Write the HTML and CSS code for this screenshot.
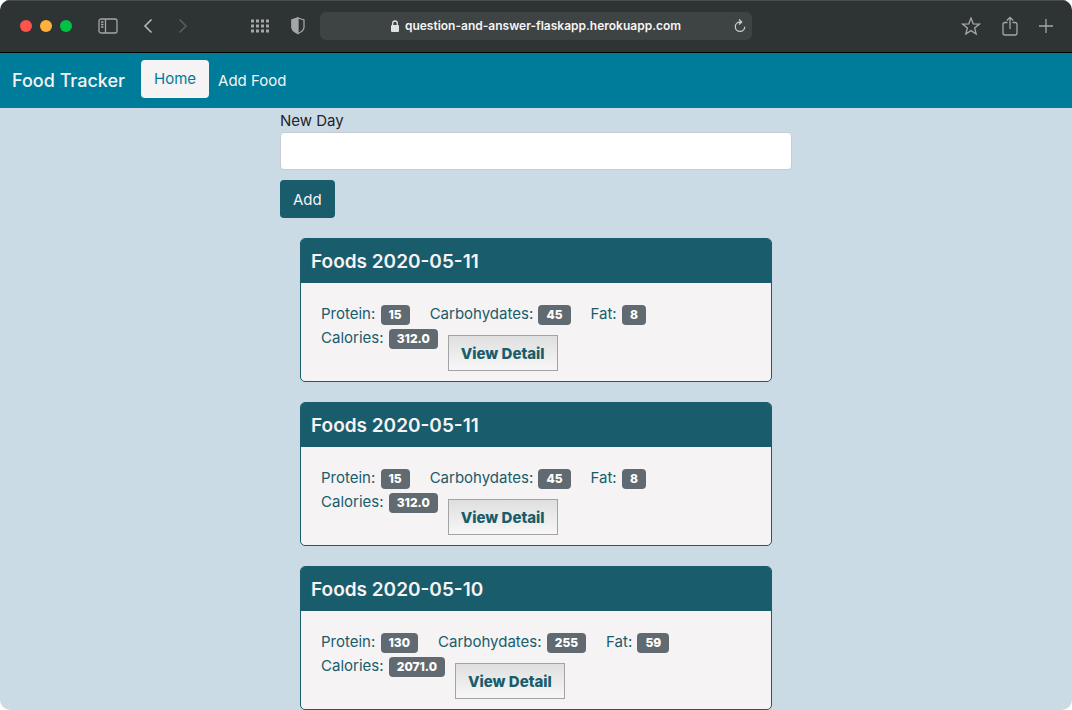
FILE: index.html
```html
<!DOCTYPE html>
<html lang="en">
<head>
<meta charset="utf-8">
<meta name="viewport" content="width=device-width, initial-scale=1">
<title>Food Tracker</title>
<link rel="stylesheet" href="styles.css">
</head>
<body>
<div class="window">
  <header class="toolbar">
    <div class="side side-left">
      <div class="lights"><span class="light red"></span><span class="light yellow"></span><span class="light green"></span></div>
      <button class="tool sidebar-tool" aria-label="Sidebar"><svg width="20" height="16" viewBox="0 0 20 16"><rect x="1" y="1" width="18" height="14" rx="2"/><path d="M7.500 1v14M3 4h2.500M3 6.500h2.500M3 9h2.500"/></svg></button>
      <button class="tool back-tool" aria-label="Back"><svg width="10" height="16" viewBox="0 0 10 16"><path class="bold" d="M8.500 1.500L2 8l6.500 6.500"/></svg></button>
      <button class="tool dim" aria-label="Forward" disabled><svg width="10" height="16" viewBox="0 0 10 16"><path class="bold" d="M1.500 1.500L8 8l-6.500 6.500"/></svg></button>
      <span class="spacer"></span>
      <button class="tool" aria-label="Start page"><svg class="dots" width="18" height="14" viewBox="0 0 18 14"><path d="M0 .5h3v3H0zM5 .5h3v3H5zM10 .5h3v3h-3zM15 .5h3v3h-3zM0 5.500h3v3H0zM5 5.500h3v3H5zM10 5.500h3v3h-3zM15 5.500h3v3h-3zM0 10.500h3v3H0zM5 10.500h3v3H5zM10 10.500h3v3h-3zM15 10.500h3v3h-3z"/></svg></button>
      <button class="tool shield-tool" aria-label="Privacy report"><svg width="14" height="18" viewBox="0 0 14 18"><path d="M7 1l6 2v7c0 3-2.500 5-6 6.500C3.500 15 1 13 1 10V3z"/><path class="solid" d="M7 1v15.500C3.500 15 1 13 1 10V3z"/></svg></button>
    </div>
    <div class="address">
      <svg class="lock" width="8" height="12" viewBox="0 0 8 12"><rect class="fill" x="0" y="5" width="8" height="7" rx="1"/><path d="M1.700 5.500V3.500a2.300 2.500 0 0 1 4.600 0v2"/></svg>
      <span class="host">question-and-answer-flaskapp.herokuapp.com</span>
      <button class="reload" aria-label="Reload"><svg width="12" height="14" viewBox="0 0 12 14"><path d="M7.500 3H6a4.700 4.700 0 1 0 4.700 4.700M5 .6L7.700 3 5 5.500"/></svg></button>
    </div>
    <div class="side side-right">
      <button class="tool" aria-label="Bookmark"><svg width="20" height="18" viewBox="0 0 20 18"><path d="M10 1l2.200 5.800 6.200.3-4.800 3.900 1.600 6L10 13.600 4.800 17l1.600-6-4.800-3.900 6.200-.3z"/></svg></button>
      <button class="tool" aria-label="Share"><svg width="16" height="20" viewBox="0 0 16 20"><path d="M5.500 6.500H3a2 2 0 0 0-2 2V17a2 2 0 0 0 2 2h10a2 2 0 0 0 2-2V8.500a2 2 0 0 0-2-2h-2.500M8 13V1.500M4.800 4.500L8 1.300l3.200 3.200"/></svg></button>
      <button class="tool" aria-label="New tab"><svg width="14" height="14" viewBox="0 0 14 14"><path d="M7 0v14M0 7h14"/></svg></button>
    </div>
  </header>

  <nav class="navbar">
    <a class="brand" href="#">Food Tracker</a>
    <a class="nav-link active" href="#">Home</a>
    <a class="nav-link" href="#">Add Food</a>
  </nav>

  <main class="content">
    <form class="day-form">
      <label for="day">New Day</label>
      <input id="day" type="text">
      <button class="add" type="button">Add</button>
    </form>

    <section class="cards">
      <article class="card">
        <h2>Foods 2020-05-11</h2>
        <div class="card-body">
          <div class="row"><span class="stat">Protein: <b>15</b></span><span class="stat">Carbohydates: <b>45</b></span><span class="stat">Fat: <b>8</b></span></div>
          <div class="row last"><span class="stat">Calories: <b>312.0</b></span><button class="detail" type="button">View Detail</button></div>
        </div>
      </article>
      <article class="card">
        <h2>Foods 2020-05-11</h2>
        <div class="card-body">
          <div class="row"><span class="stat">Protein: <b>15</b></span><span class="stat">Carbohydates: <b>45</b></span><span class="stat">Fat: <b>8</b></span></div>
          <div class="row last"><span class="stat">Calories: <b>312.0</b></span><button class="detail" type="button">View Detail</button></div>
        </div>
      </article>
      <article class="card">
        <h2>Foods 2020-05-10</h2>
        <div class="card-body">
          <div class="row"><span class="stat">Protein: <b>130</b></span><span class="stat">Carbohydates: <b>255</b></span><span class="stat">Fat: <b>59</b></span></div>
          <div class="row last"><span class="stat">Calories: <b>2071.0</b></span><button class="detail" type="button">View Detail</button></div>
        </div>
      </article>
    </section>
  </main>
</div>
</body>
</html>
```
FILE: styles.css
```css
* { box-sizing: border-box; }
body {
  margin: 0;
  background: #fff;
  color: #212529;
  font: 15px/24px Inter, "Liberation Sans", sans-serif;
}
button, input { font: inherit; }
.window {
  min-height: 100vh;
  overflow: hidden;
  border-radius: 10px;
  background: #cbdbe5;
}

.toolbar {
  display: grid;
  grid-template-columns: 1fr 432px 1fr;
  align-items: center;
  height: 53px;
  padding-bottom: 1px;
  background: #2e3334;
  border-top: 1px solid #474c4d;
  border-bottom: 1px solid #000;
}
.side { display: flex; align-items: center; }
.side-left { padding: 0 15px 0 20px; }
.side-right { justify-content: flex-end; gap: 21px; padding-right: 19px; }
.lights { display: flex; gap: 8px; }
.light { width: 12px; height: 12px; border-radius: 50%; }
.red { background: #ff534d; }
.yellow { background: #ffb13c; }
.green { background: #00c244; }
.tool, .reload {
  display: flex;
  padding: 0;
  border: 0;
  background: none;
}
.tool svg, .reload svg, .lock { fill: none; stroke: #a3a7a7; stroke-width: 1.3; }
.tool .bold { stroke: #b4b8b8; stroke-width: 1.6; }
.tool .solid { fill: #a3a7a7; }
.tool .dots { fill: #a3a7a7; stroke: none; }
.dim { opacity: .3; }
.sidebar-tool { margin: 0 25px 0 26px; }
.back-tool { margin-right: 25px; }
.spacer { flex: 1; }
.shield-tool { margin-left: 22px; }
.address {
  display: flex;
  align-items: center;
  justify-content: center;
  gap: 6px;
  position: relative;
  height: 28px;
  border-radius: 6px;
  background: #3e4343;
  color: #f4f5f5;
  font-size: 12px;
  font-weight: 600;
}
.address .lock { stroke: #dfe1e1; }
.lock .fill { fill: #dfe1e1; stroke: none; }
.reload { position: absolute; right: 6px; top: 7px; }
.reload svg { stroke: #c8cbcb; }

.navbar {
  display: flex;
  align-items: center;
  height: 55px;
  padding: 0 12px;
  background: #007c9b;
}
.navbar a { color: #f5f3f4; text-decoration: none; }
.navbar .brand { margin-right: 16px; font-size: 18px; font-weight: 500; }
.nav-link { padding: 7px 9px; }
.navbar .active {
  margin-bottom: 3px;
  padding: 7px 13px;
  border-radius: 4px;
  background: #f5f3f4;
  color: #007c9b;
}

.content { width: 50%; margin: 0 auto; padding: 0 12px; }
.day-form { display: flex; flex-direction: column; align-items: flex-start; }
.day-form label { padding-top: 1px; line-height: 23px; }
.day-form input {
  width: 100%;
  height: 38px;
  padding: 6px 12px;
  border: 1px solid #c5ccd3;
  border-radius: 4px;
  background: #fff;
}
.add {
  height: 38px;
  margin-top: 10px;
  padding: 1px 13px 0;
  border: 0;
  border-radius: 4px;
  background: #195c6b;
  color: #f5f3f4;
}
.cards { display: grid; gap: 20px; padding: 20px 20px 0; }
.card {
  overflow: hidden;
  border: 1px solid #195c6b;
  border-radius: 5px;
  background: #f5f3f4;
  color: #195c6b;
}
.card h2 {
  margin: 0;
  padding: 11px 10px 9px;
  background: #195c6b;
  color: #f5f3f4;
  font-size: 19px;
  font-weight: 600;
  line-height: 24px;
}
.card-body { padding: 19px 20px 10px; }
.row { display: flex; flex-wrap: wrap; column-gap: 20px; }
.last { column-gap: 10px; }
.stat b {
  display: inline-block;
  margin-left: 1px;
  padding: 4px 8px;
  border-radius: 4px;
  background: #606a70;
  color: #fff;
  font-size: 12px;
  font-weight: 800;
  line-height: 12px;
}
.detail {
  height: 36px;
  margin-top: 9px;
  padding: 1px 12px 0;
  border: 1px solid #a3a3a3;
  background: linear-gradient(#dfdfdf, #f7f7f7);
  color: #195c6b;
  font-weight: 800;
}
```
